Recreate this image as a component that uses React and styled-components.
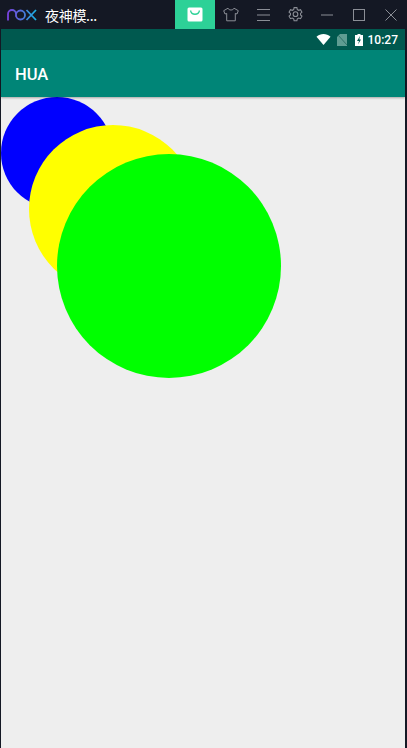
import React from "react";
import styled, { createGlobalStyle } from "styled-components";

const GlobalStyle = createGlobalStyle`
  html, body {
    margin: 0;
    padding: 0;
    background: #141824;
  }
  body {
    font-family: Roboto, "Noto Sans CJK SC", sans-serif;
  }
`;

const Window = styled.div`
  display: flex;
  flex-direction: column;
  width: 407px;
  height: 748px;
  overflow: hidden;
  background: #141824;
`;

const TitleBar = styled.div`
  display: flex;
  align-items: center;
  flex: none;
  height: 29px;
`;

const Brand = styled.div`
  display: flex;
  align-items: center;
  width: 175px;
  padding-left: 7px;
  box-sizing: border-box;
`;

const AppName = styled.span`
  margin-left: 8px;
  font-family: "Noto Sans CJK SC", sans-serif;
  font-size: 14px;
  letter-spacing: -0.3px;
  color: #fff;
  white-space: nowrap;
`;

const ShopTab = styled.div`
  display: flex;
  align-items: center;
  justify-content: center;
  width: 40px;
  height: 29px;
  background: #2dd197;
`;

const TitleButton = styled.div`
  display: flex;
  align-items: center;
  justify-content: center;
  width: ${(p) => p.$w}px;
  height: 29px;
`;

const Screen = styled.div`
  display: flex;
  flex-direction: column;
  flex: 1;
  margin: 0 2px 0 1px;
  background: #eeeeee;
`;

const StatusBar = styled.div`
  display: flex;
  align-items: center;
  justify-content: flex-end;
  flex: none;
  height: 21px;
  padding-right: 7px;
  background: #00594f;
`;

const Clock = styled.span`
  margin-left: 5px;
  font-size: 12px;
  font-weight: 500;
  color: #fff;
`;

const StatusIcon = styled.svg`
  display: block;
  margin-left: ${(p) => p.$gap || 0}px;
`;

const AppBar = styled.div`
  position: relative;
  display: flex;
  align-items: center;
  flex: none;
  height: 47px;
  padding: 1px 0 0 14px;
  box-sizing: border-box;
  background: #008577;
  box-shadow: 0 1px 2px rgba(0, 0, 0, 0.3);
`;

const AppTitle = styled.h1`
  margin: 0;
  font-size: 16.5px;
  font-weight: 500;
  color: #fff;
`;

const Canvas = styled.svg`
  display: block;
  flex: none;
`;

const circles = [
  { cx: 56, cy: 56, r: 56, fill: "#0000ff" },
  { cx: 112, cy: 112, r: 84, fill: "#ffff00" },
  { cx: 168, cy: 169, r: 112, fill: "#00ff00" },
];

function NoxLogo() {
  return (
    <svg width="30" height="12" viewBox="0 0 30 12" fill="none" strokeWidth="1.800">
      <defs>
        <linearGradient id="nox" gradientUnits="userSpaceOnUse" x1="0" y1="0" x2="30" y2="0">
          <stop offset="0" stopColor="#7b3fe0" />
          <stop offset="0.55" stopColor="#4a78d8" />
          <stop offset="1" stopColor="#16b8e8" />
        </linearGradient>
      </defs>
      <path
        d="M1 11.500V5a4 4 0 0 1 8 0v2.500M9 6a4.500 4.500 0 1 0 9 0a4.500 4.500 0 1 0-9 0M19.500 1l9.500 10M29 1l-9.500 10"
        stroke="url(#nox)"
      />
    </svg>
  );
}

function ShopIcon() {
  return (
    <svg width="16" height="15" viewBox="0 0 16 15">
      <rect x="0.5" y="0.5" width="15" height="14" rx="1.500" fill="#fff" />
      <path d="M3.500 3.500c1 5 8 5 9 0" fill="none" stroke="#2dd197" strokeWidth="1.300" />
    </svg>
  );
}

function ShirtIcon() {
  return (
    <svg width="16" height="15" viewBox="0 0 16 14" fill="none" stroke="#8b8e96">
      <path d="M5 .7 .7 3.200 2 6.500l1.700-.6v7.400h8.600V5.900l1.700.6 1.300-3.300L11 .7c-.6 2.400-5.400 2.400-6 0Z" />
    </svg>
  );
}

function MenuIcon() {
  return (
    <svg width="13" height="12" viewBox="0 0 13 12" stroke="#8b8e96">
      <path d="M0 .5h13M0 6h13M0 11.500h13" />
    </svg>
  );
}

function GearIcon() {
  return (
    <svg width="15" height="15" viewBox="0 0 14 14" fill="none" stroke="#8b8e96">
      <path d="M5.700.6h2.600l.4 1.800 1.300.7 1.700-.6 1.300 2.300-1.300 1.200v1.400l1.300 1.200-1.300 2.300-1.700-.6-1.300.7-.4 1.800H5.700l-.4-1.800-1.300-.7-1.700.6L1 8.600l1.300-1.200V6L1 4.800l1.300-2.300 1.700.6 1.300-.7Z" />
      <circle cx="7" cy="6.700" r="2.200" />
    </svg>
  );
}

function MinimizeIcon() {
  return (
    <svg width="12" height="2" viewBox="0 0 12 2" stroke="#8b8e96">
      <path d="M0 1h12" />
    </svg>
  );
}

function MaximizeIcon() {
  return (
    <svg width="12" height="12" viewBox="0 0 12 12" fill="none" stroke="#8b8e96">
      <rect x="0.5" y="0.5" width="11" height="11" />
    </svg>
  );
}

function CloseIcon() {
  return (
    <svg width="12" height="12" viewBox="0 0 12 12" stroke="#8b8e96">
      <path d="M.5.500l11 11M11.500.500l-11 11" />
    </svg>
  );
}

export default function App() {
  return (
    <Window>
      <GlobalStyle />
      <TitleBar>
        <Brand>
          <NoxLogo />
          <AppName>夜神模...</AppName>
        </Brand>
        <ShopTab>
          <ShopIcon />
        </ShopTab>
        <TitleButton $w={32}>
          <ShirtIcon />
        </TitleButton>
        <TitleButton $w={32}>
          <MenuIcon />
        </TitleButton>
        <TitleButton $w={32}>
          <GearIcon />
        </TitleButton>
        <TitleButton $w={32}>
          <MinimizeIcon />
        </TitleButton>
        <TitleButton $w={32}>
          <MaximizeIcon />
        </TitleButton>
        <TitleButton $w={32}>
          <CloseIcon />
        </TitleButton>
      </TitleBar>
      <Screen>
        <StatusBar>
          <StatusIcon width="15" height="11" viewBox="0 0 14 11">
            <path d="M0 2.800C4-.9 10-.9 14 2.800L7 11Z" fill="#fff" />
          </StatusIcon>
          <StatusIcon $gap={6} width="10" height="12" viewBox="0 0 10 12">
            <path d="M3 0h7v12H0V3Z" fill="#5f9c92" />
            <path d="M1 1l9 10" stroke="#2f7268" />
          </StatusIcon>
          <StatusIcon $gap={8} width="8" height="12" viewBox="0 0 8 12">
            <path d="M2.500 0h3v1H8v11H0V1h2.500Z" fill="#fff" />
            <path d="M5 2 2 7h2l-1 3.500L6 5.500H4.300Z" fill="#00594f" />
          </StatusIcon>
          <Clock>10:27</Clock>
        </StatusBar>
        <AppBar>
          <AppTitle>HUA</AppTitle>
        </AppBar>
        <Canvas width="404" height="300" viewBox="0 0 404 300">
          {circles.map((c) => (
            <circle key={c.fill} cx={c.cx} cy={c.cy} r={c.r} fill={c.fill} />
          ))}
        </Canvas>
      </Screen>
    </Window>
  );
}
